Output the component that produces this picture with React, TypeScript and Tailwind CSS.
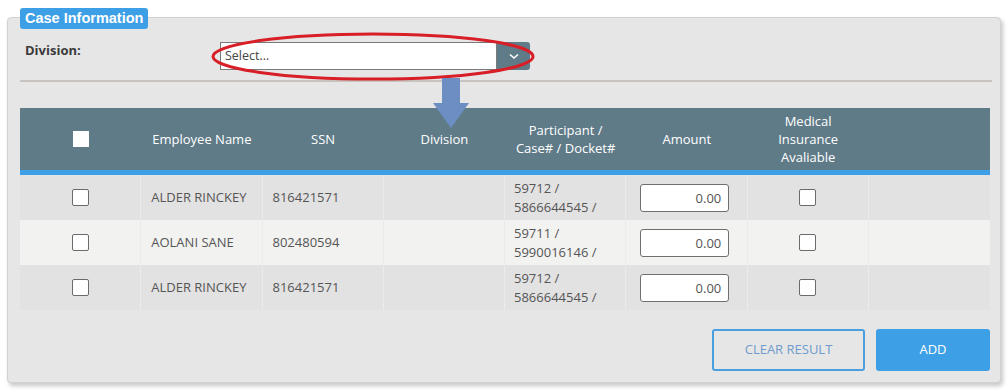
import React from "react";

const rows = [
  { name: "ALDER RINCKEY", ssn: "816421571", p1: "59712 /", p2: "5866644545 /", bg: "bg-[#e2e2e2]" },
  { name: "AOLANI SANE", ssn: "802480594", p1: "59711 /", p2: "5990016146 /", bg: "bg-[#f2f2f1]" },
  { name: "ALDER RINCKEY", ssn: "816421571", p1: "59712 /", p2: "5866644545 /", bg: "bg-[#e2e2e2]" },
];

function Box() {
  return <div className="w-[17px] h-[17px] bg-white border border-[#6b6b6b] rounded-[2px]" />;
}

export default function App() {
  const font = { fontFamily: '"Open Sans", "Noto Sans", sans-serif' };
  return (
    <div className="relative w-[1008px] h-[390px] bg-white pt-[17px] pl-[7px]" style={font}>
      <div className="relative w-[994px] h-[366px] bg-[#e6e6e7] border border-[#d2d2d2] rounded-[4px] shadow-[2px_3px_4px_rgba(0,0,0,0.22)] pl-[12px] pr-[10px]">
        <div
          className="absolute left-[12px] top-[-10px] h-[21px] px-[5px] rounded-[3px] bg-[#3d9fe6] text-white text-[14.5px] font-bold leading-[21px]"
          style={{ fontFamily: '"Liberation Sans", Arial, sans-serif' }}
        >
          Case Information
        </div>

        <div className="flex items-start pt-[24px] h-[62px]">
          <div className="w-[200px] pl-[5px] mt-[-1px] text-[13px] font-bold text-[#3a3a3a] leading-[18px]">Division:</div>
          <div className="flex h-[28px]">
            <div className="w-[277px] h-[28px] bg-white border border-[#7a7a7a] text-[12.5px] text-[#444] leading-[26px] pl-[4px]">
              Select...
            </div>
            <div className="w-[33px] h-[28px] bg-[#5f7b88] flex items-center justify-center rounded-r-[3px]">
              <svg width="10" height="7" viewBox="0 0 10 7">
                <path d="M1 1.5 L5 5 L9 1.5" fill="none" stroke="white" strokeWidth="1.6" />
              </svg>
            </div>
          </div>
        </div>
        <div className="h-[2px] bg-[#c8c3be] mr-[-2px]" />

        <div className="mt-[26px]">
          <div className="grid grid-cols-8 h-[62px] bg-[#5f7b88] text-white text-[13px] leading-[18px] text-center items-center">
            <div className="flex justify-center">
              <div className="w-[16px] h-[16px] bg-white" />
            </div>
            <div>Employee Name</div>
            <div>SSN</div>
            <div>Division</div>
            <div>
              Participant /<br />Case# / Docket#
            </div>
            <div>Amount</div>
            <div>
              Medical
              <br />
              Insurance
              <br />
              Avaliable
            </div>
            <div />
          </div>
          <div className="h-[5px] bg-[#3d9fe6]" />
          {rows.map((r, i) => (
            <div key={i} className={`grid grid-cols-8 h-[45px] ${r.bg} text-[13px] text-[#555] leading-[19px]`}>
              <div className="flex items-center justify-center border-r border-[#ebebeb]">
                <Box />
              </div>
              <div className="flex items-center pl-[10px] border-r border-[#ebebeb]">{r.name}</div>
              <div className="flex items-center pl-[10px] border-r border-[#ebebeb]">{r.ssn}</div>
              <div className="border-r border-[#ebebeb]" />
              <div className="flex flex-col justify-center pl-[9px] border-r border-[#ebebeb]">
                <span>{r.p1}</span>
                <span>{r.p2}</span>
              </div>
              <div className="flex items-center pl-[14px] border-r border-[#ebebeb]">
                <div className="w-[89px] h-[28px] bg-white border border-[#6f6f6f] rounded-[3px] text-right pr-[7px] leading-[26px]">
                  0.00
                </div>
              </div>
              <div className="flex items-center justify-center border-r border-[#ebebeb]">
                <Box />
              </div>
              <div />
            </div>
          ))}
        </div>

        <div className="flex justify-end gap-[11px] mt-[19px]">
          <button className="w-[153px] h-[42px] border-2 border-[#4aa0df] rounded-[3px] text-[13px] text-[#6d9bcc] bg-transparent">
            CLEAR RESULT
          </button>
          <button className="w-[114px] h-[42px] bg-[#3d9fe6] rounded-[3px] text-[13px] text-white">ADD</button>
        </div>
      </div>

      <svg className="absolute left-0 top-0 pointer-events-none" width="1008" height="390">
        <ellipse cx="373" cy="56.5" rx="160" ry="22.5" fill="none" stroke="#d81e27" strokeWidth="3" />
        <rect x="442" y="78" width="18" height="25" fill="#6d8ec2" />
        <polygon points="433,103 469,103 451,128" fill="#6d8ec2" />
      </svg>
    </div>
  );
}
